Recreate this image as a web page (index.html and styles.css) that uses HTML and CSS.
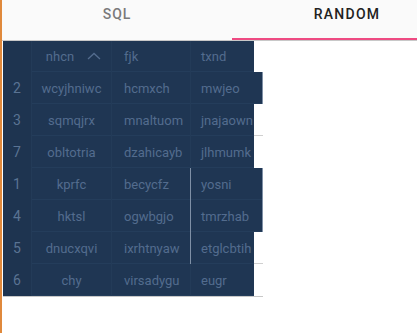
FILE: index.html
```html
<!DOCTYPE html>
<html>
<head>
<meta charset="utf-8">
<link rel="stylesheet" href="styles.css">
</head>
<body>
<div class="page">
  <div class="tabs">
    <div class="tab">SQL</div>
    <div class="tab active">RANDOM</div>
  </div>
  <div class="table">
    <div class="row head">
      <div class="cell idx"></div>
      <div class="cell c1"><span>nhcn</span>
        <svg class="chev" width="14" height="8" viewBox="0 0 14 8"><path d="M1 7 L7 1.5 L13 7" fill="none" stroke="#536c8e" stroke-width="1.3"/></svg>
      </div>
      <div class="cell c2">fjk</div>
      <div class="cell c3">txnd</div>
    </div>
    <div class="row wide">
      <div class="cell idx">2</div><div class="cell c1">wcyjhniwc</div><div class="cell c2">hcmxch</div><div class="cell c3">mwjeo</div>
    </div>
    <div class="row tail">
      <div class="cell idx">3</div><div class="cell c1">sqmqjrx</div><div class="cell c2">mnaltuom</div><div class="cell c3">jnajaown</div>
    </div>
    <div class="row">
      <div class="cell idx">7</div><div class="cell c1">obltotria</div><div class="cell c2">dzahicayb</div><div class="cell c3">jlhmumk</div>
    </div>
    <div class="row wide lit">
      <div class="cell idx">1</div><div class="cell c1">kprfc</div><div class="cell c2">becycfz</div><div class="cell c3">yosni</div>
    </div>
    <div class="row wide lit">
      <div class="cell idx">4</div><div class="cell c1">hktsl</div><div class="cell c2">ogwbgjo</div><div class="cell c3">tmrzhab</div>
    </div>
    <div class="row tail lit">
      <div class="cell idx">5</div><div class="cell c1">dnucxqvi</div><div class="cell c2">ixrhtnyaw</div><div class="cell c3">etglcbtih</div>
    </div>
    <div class="row last">
      <div class="cell idx">6</div><div class="cell c1">chy</div><div class="cell c2">virsadygu</div><div class="cell c3">eugr</div>
    </div>
  </div>
</div>
</body>
</html>
```

FILE: styles.css
```css
html, body {
  margin: 0;
  padding: 0;
  background: #ffffff;
}
body {
  font-family: Roboto, "Noto Sans", sans-serif;
  width: 417px;
  height: 333px;
  overflow: hidden;
}
.page {
  border-left: 2px solid #e0893c;
  height: 333px;
  box-sizing: border-box;
}
.tabs {
  display: flex;
  height: 41px;
  overflow: hidden;
  background: #fafafa;
  box-sizing: border-box;
  border-bottom: 1px solid #c8c8c8;
}
.tab {
  flex: 0 0 230px;
  box-sizing: border-box;
  text-align: center;
  font-size: 14px;
  font-weight: 500;
  letter-spacing: 1px;
  color: #7a7a7a;
  padding-top: 6px;
  line-height: 17px;
}
.tab.active {
  color: #222222;
  letter-spacing: 1.25px;
  border-bottom: 2px solid #ee4a82;
}
.table {
  margin-left: 1px;
  display: flex;
  flex-direction: column;
  align-items: flex-start;
}
.row {
  display: flex;
  width: 251px;
  height: 32px;
  background: #1f3653;
  color: #536c8e;
  font-size: 13px;
  box-shadow: inset 0 -1px 0 #243d5b;
}
.row.head {
  height: 31px;
}
.row.wide {
  border-right: 1px solid #7f90a6;
  width: 259px;
}
.row.tail {
  position: relative;
}
.row.tail::after {
  content: "";
  position: absolute;
  left: 251px;
  bottom: 0;
  width: 9px;
  height: 1px;
  background: #d0d0d0;
}
.row.last {
  border-bottom: 1px solid #c8c8c8;
  position: relative;
}
.row.last::after {
  content: "";
  position: absolute;
  left: 251px;
  bottom: -1px;
  width: 9px;
  height: 1px;
  background: #c8c8c8;
}
.cell {
  display: flex;
  align-items: center;
  box-sizing: border-box;
  height: 100%;
  white-space: nowrap;
  overflow: hidden;
}
.idx {
  width: 29px;
  justify-content: center;
  background: #1e3450;
  color: #5a7393;
  border-right: 1px solid #233b58;
  font-size: 14px;
}
.c1 {
  width: 80px;
  justify-content: center;
  border-right: 1px solid #233b58;
}
.head .c1 span {
  margin-left: 4px;
}
.chev {
  margin-left: 13px;
  margin-bottom: 2px;
}
.c2 {
  width: 79px;
  padding-left: 12px;
  border-right: 1px solid #233b58;
}
.lit .c2 {
  border-right: 1px solid #7f90a6;
}
.c3 {
  flex: 1;
  padding-left: 10px;
}
```
